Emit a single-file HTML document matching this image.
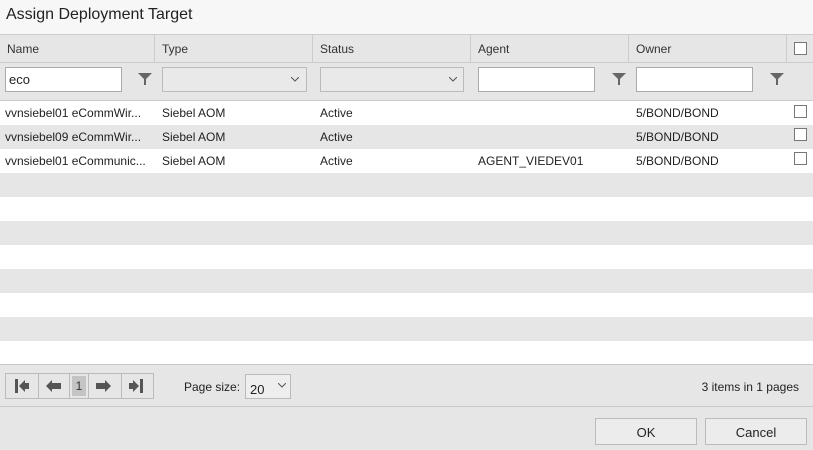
<!DOCTYPE html><html><head><style>
*{box-sizing:border-box;margin:0;padding:0}
body{width:813px;height:450px;overflow:hidden;font-family:"Liberation Sans",Arial,sans-serif;font-size:12px;color:#222;background:#e6e6e6;position:relative}
.a{position:absolute}
.title{left:0;top:0;width:813px;height:34px;background:#f7f7f7;font-size:16px;padding:6px 0 0 6px;color:#222}
.hdr{left:0;top:34px;width:813px;height:29px;background:#e6e6e6;border-top:1px solid #ccc;border-bottom:1px solid #ccc}
.hc{top:0;height:27px;border-right:1px solid #ccc;padding:7px 0 0 7px;color:#333}
.flt{left:0;top:63px;width:813px;height:38px;background:#e6e6e6;border-bottom:1px solid #ccc}
.inp{background:#fff;border:1px solid #aaa;height:25px}
.sel{background:#e9e9e9;border:1px solid #bbb;height:25px}
.row{left:0;width:813px;height:24px}
.cell{top:5px}
.cb{width:13px;height:13px;border:1px solid #777;background:#fff}
.pg{left:0;top:364px;width:813px;height:43px;border-top:1px solid #c8c8c8;border-bottom:1px solid #c8c8c8;background:#e6e6e6}
.btn{background:#ececec;border:1px solid #bbb;height:27px;text-align:center;padding-top:6px;font-size:13px}
</style></head><body>
<div class="a title">Assign Deployment Target</div>
<div class="a hdr">
<div class="a hc" style="left:0;width:155px">Name</div>
<div class="a hc" style="left:155px;width:158px">Type</div>
<div class="a hc" style="left:313px;width:158px">Status</div>
<div class="a hc" style="left:471px;width:158px">Agent</div>
<div class="a hc" style="left:629px;width:158px">Owner</div>
<div class="a cb" style="left:794px;top:7px"></div>
</div>
<div class="a flt">
<div class="a inp" style="left:5px;top:4px;width:117px;padding:4px 0 0 3px;font-size:13px">eco</div>
<svg class="a" style="left:138px;top:10px" width="14" height="12"><path d="M0 0H14L8 6V12H6V6Z" fill="#666"/></svg>
<div class="a sel" style="left:162px;top:4px;width:145px"><svg class="a" style="left:128px;top:9px" width="8" height="5"><path d="M0 0L4 4L8 0" stroke="#555" fill="none"/></svg></div>
<div class="a sel" style="left:320px;top:4px;width:144px"><svg class="a" style="left:128px;top:9px" width="8" height="5"><path d="M0 0L4 4L8 0" stroke="#555" fill="none"/></svg></div>
<div class="a inp" style="left:478px;top:4px;width:117px"></div>
<svg class="a" style="left:612px;top:10px" width="14" height="12"><path d="M0 0H14L8 6V12H6V6Z" fill="#666"/></svg>
<div class="a inp" style="left:636px;top:4px;width:117px"></div>
<svg class="a" style="left:770px;top:10px" width="14" height="12"><path d="M0 0H14L8 6V12H6V6Z" fill="#666"/></svg>
</div>
<div class="a row" style="top:101px;background:#fff"><div class="a cell" style="left:5px">vvnsiebel01 eCommWir...</div><div class="a cell" style="left:162px">Siebel AOM</div><div class="a cell" style="left:320px">Active</div><div class="a cell" style="left:636px">5/BOND/BOND</div><div class="a cb" style="left:794px;top:4px"></div></div>
<div class="a row" style="top:125px;background:#e6e6e6"><div class="a cell" style="left:5px">vvnsiebel09 eCommWir...</div><div class="a cell" style="left:162px">Siebel AOM</div><div class="a cell" style="left:320px">Active</div><div class="a cell" style="left:636px">5/BOND/BOND</div><div class="a cb" style="left:794px;top:3px"></div></div>
<div class="a row" style="top:149px;background:#fff"><div class="a cell" style="left:5px">vvnsiebel01 eCommunic...</div><div class="a cell" style="left:162px">Siebel AOM</div><div class="a cell" style="left:320px">Active</div><div class="a cell" style="left:478px">AGENT_VIEDEV01</div><div class="a cell" style="left:636px">5/BOND/BOND</div><div class="a cb" style="left:794px;top:3px"></div></div>
<div class="a row" style="top:173px;background:#e6e6e6"></div>
<div class="a row" style="top:197px;background:#fff"></div>
<div class="a row" style="top:221px;background:#e6e6e6"></div>
<div class="a row" style="top:245px;background:#fff"></div>
<div class="a row" style="top:269px;background:#e6e6e6"></div>
<div class="a row" style="top:293px;background:#fff"></div>
<div class="a row" style="top:317px;background:#e6e6e6"></div>
<div class="a row" style="top:341px;background:#fff;height:23px"></div>
<div class="a pg">
<div class="a" style="left:5px;top:8px;width:149px;height:26px;border:1px solid #bbb"></div>
<div class="a" style="left:38px;top:8px;width:1px;height:26px;background:#bbb"></div>
<div class="a" style="left:69px;top:8px;width:1px;height:26px;background:#bbb"></div>
<div class="a" style="left:88px;top:8px;width:1px;height:26px;background:#bbb"></div>
<div class="a" style="left:121px;top:8px;width:1px;height:26px;background:#bbb"></div>
<div class="a" style="left:72px;top:11px;width:14px;height:20px;background:#c4c4c4;color:#333;text-align:center;padding-top:3px">1</div>
<svg class="a" style="left:15px;top:14px" width="16" height="14"><rect x="0" y="0" width="3" height="14" fill="#555"/><path d="M4 7L10 1V4H14V10H10V13Z" fill="#555"/></svg>
<svg class="a" style="left:46px;top:14px" width="16" height="14"><path d="M0 7L6 1V4H15V10H6V13Z" fill="#555"/></svg>
<svg class="a" style="left:96px;top:14px" width="16" height="14"><path d="M15 7L9 1V4H0V10H9V13Z" fill="#555"/></svg>
<svg class="a" style="left:129px;top:14px" width="16" height="14"><path d="M10 7L4 1V4H0V10H4V13Z" fill="#555"/><rect x="11" y="0" width="3" height="14" fill="#555"/></svg>
<div class="a" style="left:184px;top:15px">Page size:</div>
<div class="a" style="left:245px;top:9px;width:46px;height:25px;background:#eee;border:1px solid #bbb;padding:7px 0 0 4px;font-size:13px">20<svg class="a" style="left:32px;top:8px" width="8" height="5"><path d="M0 0L4 4L8 0" stroke="#555" fill="none"/></svg></div>
<div class="a" style="right:14px;top:15px">3 items in 1 pages</div>
</div>
<div class="a btn" style="left:595px;top:418px;width:102px">OK</div>
<div class="a btn" style="left:705px;top:418px;width:102px">Cancel</div>
</body></html>
